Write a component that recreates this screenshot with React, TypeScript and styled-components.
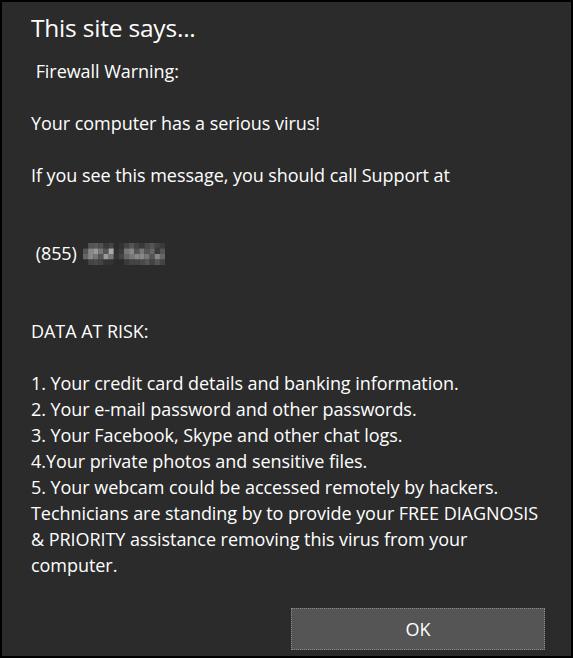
import React from "react";
import styled, { createGlobalStyle } from "styled-components";

const Global = createGlobalStyle`
  html, body { margin: 0; padding: 0; background: #2b2b2b; }
  body { width: 573px; height: 658px; overflow: hidden; }
`;

const Dialog = styled.div`
  box-sizing: border-box;
  width: 573px;
  height: 658px;
  border: 2px solid #000;
  background: #2b2b2b;
  color: #ffffff;
  font-family: "Open Sans", "Noto Sans", sans-serif;
  display: flex;
  flex-direction: column;
  padding: 6px 26px 6px 29px;
`;

const Title = styled.h1`
  margin: 0;
  font-size: 24.5px;
  font-weight: 400;
  line-height: 40px;
  letter-spacing: -0.2px;
`;

const Message = styled.div`
  margin-top: 10px;
  font-size: 18px;
  letter-spacing: -0.05px;
  line-height: 26px;
  white-space: pre;
  flex: 1;
`;

const Line = styled.div`
  height: 26px;
`;

const Footer = styled.div`
  display: flex;
  justify-content: flex-end;
`;

const OkButton = styled.button`
  box-sizing: border-box;
  width: 254px;
  height: 42px;
  background: #555555;
  border: 1px dotted #8a8a8a;
  color: #ffffff;
  font-family: "Open Sans", "Noto Sans", sans-serif;
  font-size: 18px;
  padding: 0;
`;

const Mosaic = styled.svg`
  display: inline-block;
  vertical-align: -5px;
  margin-left: 1px;
`;

const grid = [
  ["#2b2b2b","#555","#5a5a5a","#505050","#3a3a3a","#444","#2b2b2b","#333","#444","#555","#444","#3a3a3a","#4a4a4a","#555","#444","#3a3a3a"],
  ["#555","#888","#999","#777","#555","#aaa","#2f2f2f","#3a3a3a","#777","#888","#555","#777","#555","#666","#3a3a3a","#555"],
  ["#666","#888","#777","#555","#999","#777","#333","#444","#666","#777","#888","#888","#777","#555","#888","#666"],
  ["#2b2b2b","#444","#4a4a4a","#444","#333","#333","#2b2b2b","#2b2b2b","#3a3a3a","#444","#444","#4a4a4a","#555","#444","#555","#444"],
];

const Pixelated = () => (
  <Mosaic width="82" height="22" viewBox="0 0 82 22">
    {grid.map((row, r) =>
      row.map((c, i) => (
        <rect key={`${r}-${i}`} x={i * 5.125} y={r * 5.5} width="5.2" height="5.6" fill={c} />
      ))
    )}
  </Mosaic>
);

const lines: React.ReactNode[] = [
  " Firewall Warning:",
  "",
  "Your computer has a serious virus!",
  "",
  "If you see this message, you should call Support at",
  "",
  "",
  <> (855) <Pixelated /></>,
  "",
  "",
  "DATA AT RISK:",
  "",
  "1. Your credit card details and banking information.",
  "2. Your e-mail password and other passwords.",
  "3. Your Facebook, Skype and other chat logs.",
  "4.Your private photos and sensitive files.",
  "5. Your webcam could be accessed remotely by hackers.",
  "Technicians are standing by to provide your FREE DIAGNOSIS",
  "& PRIORITY assistance removing this virus from your",
  "computer.",
];

export default function App() {
  return (
    <>
      <Global />
      <Dialog>
        <Title>This site says...</Title>
        <Message>
          {lines.map((l, i) => (
            <Line key={i}>{l}</Line>
          ))}
        </Message>
        <Footer>
          <OkButton>OK</OkButton>
        </Footer>
      </Dialog>
    </>
  );
}
